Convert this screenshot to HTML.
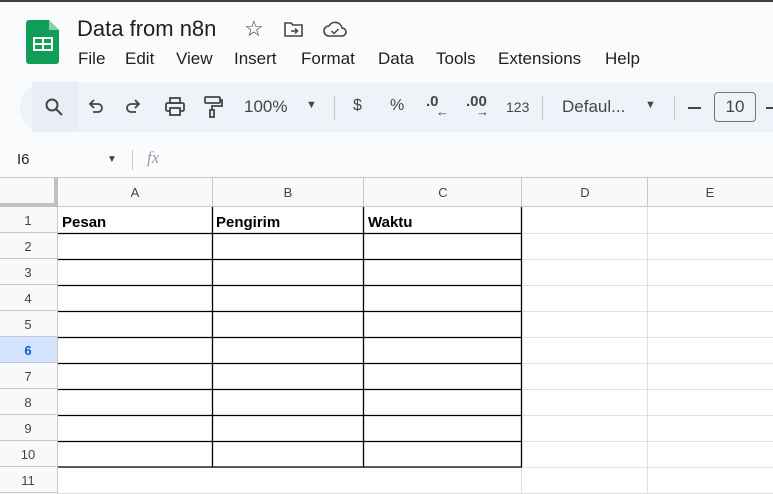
<!DOCTYPE html>
<html><head><meta charset="utf-8"><style>
*{margin:0;padding:0;box-sizing:border-box}
body{width:773px;height:494px;overflow:hidden;background:#fff;font-family:"Liberation Sans",Arial,sans-serif;position:relative}
.a{position:absolute}
.top{left:0;top:0;width:773px;height:178px;background:#f9fbfd;border-top:2px solid #3c4043}
.menu span{position:absolute;top:49px;font-size:17px;color:#1f1f1f}
.tb{left:20px;top:82px;width:780px;height:50px;background:#eef2f9;border-radius:25px}
.ic{position:absolute;color:#444746;font-size:17px}
.hdr{background:#f8f9fa;color:#444;font-size:13px;text-align:center}
</style></head><body>
<div class="a top"></div>
<svg class="a" style="left:26px;top:20px" width="34" height="44" viewBox="0 0 34 44"><path d="M3 0H23L33 10V41a3 3 0 0 1-3 3H3a3 3 0 0 1-3-3V3a3 3 0 0 1 3-3z" fill="#0f9d58"/><path d="M23 0V10H33z" fill="#87ceac"/><rect x="7" y="17" width="20" height="14" fill="#fff"/><rect x="9" y="19" width="7" height="4" fill="#0f9d58"/><rect x="18" y="19" width="7" height="4" fill="#0f9d58"/><rect x="9" y="25" width="7" height="4" fill="#0f9d58"/><rect x="18" y="25" width="7" height="4" fill="#0f9d58"/></svg>
<div class="a" style="left:77px;top:16px;font-size:22px;color:#1f1f1f">Data from n8n</div>
<div class="a" style="left:244px;top:16px;font-size:22px;color:#444">☆</div>
<svg class="a" style="left:284px;top:21px" width="20" height="17" viewBox="0 0 20 17"><path d="M1 2h6l2 2h9v11H1z" fill="none" stroke="#444" stroke-width="1.6"/><path d="M7 10h6M11 7.5l2.5 2.5-2.5 2.5" fill="none" stroke="#444" stroke-width="1.5"/></svg>
<svg class="a" style="left:323px;top:21px" width="24" height="17" viewBox="0 0 24 17"><path d="M6 15a5 5 0 0 1 0-10 7 7 0 0 1 13 2 4 4 0 0 1 0 8z" fill="none" stroke="#444" stroke-width="1.6"/><path d="M8.5 10l2.5 2.5 4.5-4.5" fill="none" stroke="#444" stroke-width="1.5"/></svg>
<div class="menu"><span style="left:78px">File</span><span style="left:125px">Edit</span><span style="left:176px">View</span><span style="left:234px">Insert</span><span style="left:301px">Format</span><span style="left:378px">Data</span><span style="left:436px">Tools</span><span style="left:498px">Extensions</span><span style="left:605px">Help</span></div>
<div class="a tb"></div>
<div class="a" style="left:32px;top:82px;width:46px;height:50px;background:#e9eef6"></div>
<svg class="a" style="left:44px;top:97px" width="20" height="20" viewBox="0 0 20 20"><circle cx="8" cy="8" r="5.5" fill="none" stroke="#444" stroke-width="2"/><path d="M12 12l6 6" stroke="#444" stroke-width="2"/></svg>
<svg class="a" style="left:87px;top:99px" width="18" height="16" viewBox="0 0 18 16"><path d="M4 5h7a4 4 0 0 1 0 8H6M7 1L3 5l4 4" fill="none" stroke="#444" stroke-width="1.8"/></svg>
<svg class="a" style="left:124px;top:99px" width="18" height="16" viewBox="0 0 18 16"><path d="M14 5H7a4 4 0 0 0 0 8h5M11 1l4 4-4 4" fill="none" stroke="#444" stroke-width="1.8"/></svg>
<svg class="a" style="left:164px;top:97px" width="22" height="20" viewBox="0 0 22 20"><rect x="2" y="6" width="18" height="8" rx="1.5" fill="none" stroke="#444" stroke-width="1.8"/><rect x="6" y="1" width="10" height="5" fill="none" stroke="#444" stroke-width="1.8"/><rect x="6" y="11" width="10" height="7" fill="#eef2f9" stroke="#444" stroke-width="1.8"/></svg>
<svg class="a" style="left:203px;top:96px" width="20" height="22" viewBox="0 0 20 22"><rect x="2" y="1" width="15" height="6" rx="1" fill="none" stroke="#444" stroke-width="1.8"/><path d="M17 4h2v6H9v4" fill="none" stroke="#444" stroke-width="1.8"/><rect x="7" y="14" width="4" height="7" fill="none" stroke="#444" stroke-width="1.8"/></svg>
<div class="ic" style="left:244px;top:97px">100%</div>
<div class="ic" style="left:306px;top:99px;font-size:11px">▼</div>
<div class="a" style="left:334px;top:96px;width:1px;height:24px;background:#c7c7c7"></div>
<div class="ic" style="left:353px;top:97px;font-size:16px">$</div>
<div class="ic" style="left:390px;top:97px;font-size:16px">%</div>
<div class="ic" style="left:426px;top:93px;font-size:15px;font-weight:bold">.0</div>
<div class="ic" style="left:436px;top:104px;font-size:13px">←</div>
<div class="ic" style="left:466px;top:93px;font-size:15px;font-weight:bold">.00</div>
<div class="ic" style="left:476px;top:104px;font-size:13px">→</div>
<div class="ic" style="left:506px;top:99px;font-size:14px">123</div>
<div class="a" style="left:542px;top:96px;width:1px;height:24px;background:#c7c7c7"></div>
<div class="ic" style="left:562px;top:97px">Defaul...</div>
<div class="ic" style="left:645px;top:99px;font-size:11px">▼</div>
<div class="a" style="left:674px;top:96px;width:1px;height:24px;background:#c7c7c7"></div>
<div class="a" style="left:688px;top:107px;width:13px;height:2px;background:#444"></div>
<div class="a" style="left:714px;top:92px;width:42px;height:30px;border:1px solid #747775;border-radius:4px;font-size:17px;color:#444;text-align:center;line-height:28px">10</div>
<div class="a" style="left:766px;top:107px;width:10px;height:2px;background:#444"></div>
<div class="a" style="left:17px;top:151px;font-size:15px;color:#1f1f1f">I6</div>
<div class="a" style="left:107px;top:154px;font-size:10px;color:#444">▼</div>
<div class="a" style="left:132px;top:150px;width:1px;height:20px;background:#c7c7c7"></div>
<div class="a" style="left:147px;top:148px;font-size:17px;color:#9aa0a6;font-style:italic;font-family:'Liberation Serif',serif">fx</div>
<!-- grid -->
<div class="a" style="left:0;top:177px;width:773px;height:1px;background:#c7c7c7"></div>
<div class="a hdr" style="left:0;top:178px;width:58px;height:29px;background:#f8f9fa;border-right:4px solid #c0c0c0;border-bottom:4px solid #c0c0c0"></div>
<svg class="a" style="left:0;top:178px" width="773" height="316">
<g fill="#f8f9fa"><rect x="58" y="0" width="715" height="29"/><rect x="0" y="29" width="57" height="287"/></g>
<rect x="0" y="159" width="57" height="26" fill="#d3e3fd"/>
<g stroke="#e1e1e1" stroke-width="1">
<path d="M521.5 29V316M647.5 29V316M58 81.5H773M58 107.5H773M58 133.5H773M58 159.5H773M58 185.5H773M58 211.5H773M58 237.5H773M58 263.5H773M58 289.5H773M58 55.5H773M58 315.5H773"/>
</g>
<g stroke="#c7c7c7" stroke-width="1">
<path d="M212.5 0V29M363.5 0V29M521.5 0V29M647.5 0V29M58 28.5H773M57.5 29V316"/>
<path d="M0 54.5H57M0 80.5H57M0 106.5H57M0 132.5H57M0 158.5H57M0 184.5H57M0 210.5H57M0 236.5H57M0 262.5H57M0 288.5H57M0 314.5H57"/>
</g>
<g stroke="#000" stroke-width="1.3">
<path d="M212.5 29V289M363.5 29V289M521.5 29V289M58 55.5H521M58 81.5H521M58 107.5H521M58 133.5H521M58 159.5H521M58 185.5H521M58 211.5H521M58 237.5H521M58 263.5H521M58 289H522"/>
</g>
<g font-family="Liberation Sans,Arial,sans-serif" font-size="13" fill="#444" text-anchor="middle">
<text x="135" y="19">A</text><text x="288" y="19">B</text><text x="443" y="19">C</text><text x="585" y="19">D</text><text x="710" y="19">E</text>
<text x="28" y="47">1</text><text x="28" y="73">2</text><text x="28" y="99">3</text><text x="28" y="125">4</text><text x="28" y="151">5</text><text x="28" y="177" fill="#0b57d0" font-weight="bold">6</text><text x="28" y="203">7</text><text x="28" y="229">8</text><text x="28" y="255">9</text><text x="28" y="281">10</text><text x="28" y="307">11</text>
</g>
<g font-family="Liberation Sans,Arial,sans-serif" font-size="15" font-weight="bold" fill="#000">
<text x="62" y="49">Pesan</text><text x="216" y="49">Pengirim</text><text x="368" y="49">Waktu</text>
</g>
</svg>
</body></html>
